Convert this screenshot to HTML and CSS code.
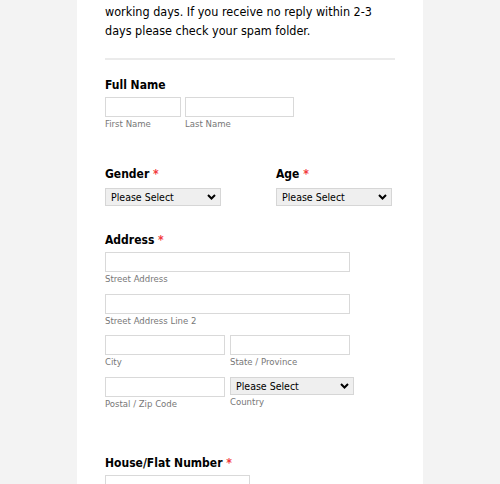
FILE: index.html
```html
<!DOCTYPE html>
<html lang="en">
<head>
    <meta charset="UTF-8">
    <title>Contact Form</title>
    <link rel="stylesheet" href="styles.css">
</head>
<body>
    <div class="form-panel">
        <!-- intro -->
        <p class="intro">Thank you for your enquiry. We aim to respond within 2-3<br>
            working days. If you receive no reply within 2-3<br>
            days please check your spam folder.</p>
        <hr class="divider">

        <!-- full name -->
        <div class="field">
            <label class="field-label">Full Name</label>
            <div class="row">
                <div class="sub">
                    <input type="text" class="input w-first">
                    <span class="sub-label">First Name</span>
                </div>
                <div class="sub">
                    <input type="text" class="input w-last">
                    <span class="sub-label">Last Name</span>
                </div>
            </div>
        </div>

        <!-- gender / age -->
        <div class="field two-col">
            <div>
                <label class="field-label">Gender <span class="req">*</span></label>
                <div class="select w-gender">
                    <select><option>Please Select</option></select>
                    <svg class="chev" width="9" height="6" viewBox="0 0 9 6"><path d="M1 1l3.5 3.5L8 1" fill="none" stroke="#000" stroke-width="2"/></svg>
                </div>
            </div>
            <div>
                <label class="field-label">Age <span class="req">*</span></label>
                <div class="select w-gender">
                    <select><option>Please Select</option></select>
                    <svg class="chev" width="9" height="6" viewBox="0 0 9 6"><path d="M1 1l3.5 3.5L8 1" fill="none" stroke="#000" stroke-width="2"/></svg>
                </div>
            </div>
        </div>

        <!-- address -->
        <div class="field address">
            <label class="field-label">Address <span class="req">*</span></label>
            <div class="sub">
                <input type="text" class="input w-full">
                <span class="sub-label">Street Address</span>
            </div>
            <div class="sub">
                <input type="text" class="input w-full">
                <span class="sub-label">Street Address Line 2</span>
            </div>
            <div class="row gap-wide">
                <div class="sub">
                    <input type="text" class="input w-half">
                    <span class="sub-label">City</span>
                </div>
                <div class="sub">
                    <input type="text" class="input w-half">
                    <span class="sub-label">State / Province</span>
                </div>
            </div>
            <div class="row gap-wide">
                <div class="sub">
                    <input type="text" class="input w-half">
                    <span class="sub-label">Postal / Zip Code</span>
                </div>
                <div class="sub">
                    <div class="select w-country">
                        <select><option>Please Select</option></select>
                        <svg class="chev" width="9" height="6" viewBox="0 0 9 6"><path d="M1 1l3.5 3.5L8 1" fill="none" stroke="#000" stroke-width="2"/></svg>
                    </div>
                    <span class="sub-label">Country</span>
                </div>
            </div>
        </div>

        <!-- house number -->
        <div class="field house">
            <label class="field-label">House/Flat Number <span class="req">*</span></label>
            <input type="text" class="input w-house">
        </div>
    </div>
</body>
</html>
```

FILE: styles.css
```css
/* base */
* {
    box-sizing: border-box;
    margin: 0;
    padding: 0;
}

html, body {
    height: 100%;
    overflow: hidden;
}

body {
    font-family: 'DejaVu Sans Condensed', 'DejaVu Sans', Verdana, sans-serif;
    background: #f3f3f3;
    color: #000;
}

.form-panel {
    width: 346px;
    margin: -18px 0 0 77px;
    background: #fff;
    padding: 0 28px 40px;
    min-height: 600px;
}

.intro {
    font-size: 12.5px;
    line-height: 19.5px;
    white-space: nowrap;
}

.divider {
    border: none;
    border-top: 2px solid #ebebeb;
    margin: 17px 0 0;
}

/* fields */
.field {
    margin-top: 18px;
}

.field-label {
    display: block;
    font-size: 12px;
    line-height: 15px;
    font-weight: bold;
    margin-bottom: 4px;
}

.req {
    color: #f23a3c;
}

.row {
    display: flex;
    gap: 4px;
}

.row.gap-wide {
    gap: 5px;
}

.sub {
    display: flex;
    flex-direction: column;
    margin-bottom: 8.5px;
}

.sub-label {
    font-size: 9.5px;
    color: #777;
    line-height: 12px;
    margin-top: 1px;
}

.input {
    display: block;
    height: 20px;
    border: 1px solid #d9d9d9;
    background: #fff;
    outline: none;
}

.w-first { width: 76px; }
.w-last { width: 109px; }
.w-full { width: 245px; }
.w-half { width: 120px; }
.w-house { width: 145px; }

.two-col {
    display: flex;
    gap: 55px;
    margin-top: 29px;
}

.two-col .field-label {
    margin-bottom: 6px;
}

.select {
    position: relative;
    height: 18px;
}

.select select {
    display: block;
    appearance: none;
    width: 100%;
    height: 100%;
    border: 1px solid #d6d6d6;
    background: #efefef;
    font-family: 'DejaVu Sans Condensed', 'DejaVu Sans', Verdana, sans-serif;
    font-size: 10.5px;
    color: #000;
    padding: 0 5px;
    border-radius: 0;
}

.chev {
    position: absolute;
    right: 5px;
    top: 6px;
    pointer-events: none;
}

.w-gender { width: 116px; }
.w-country { width: 124px; }

.address {
    margin-top: 27px;
}

.house {
    margin-top: 38px;
}
```
